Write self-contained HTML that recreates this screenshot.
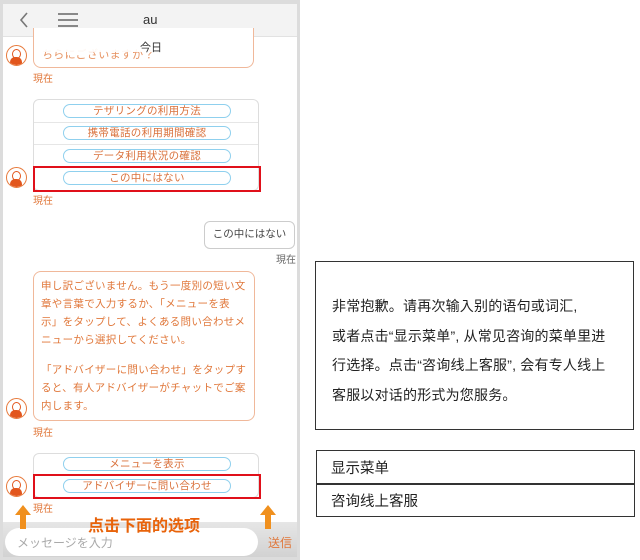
<!DOCTYPE html>
<html><head><meta charset="utf-8"><style>
*{margin:0;padding:0;box-sizing:border-box}
body{width:640px;height:560px;background:#fff;position:relative;overflow:hidden;font-family:"Liberation Sans","Noto Sans CJK JP",sans-serif}
.a{position:absolute}
.phone{left:0;top:0;width:300px;height:560px;background:#fff;border:3px solid #dcdcdc;border-top-width:4px;border-right-width:3px}
.hdr{left:3px;top:4px;width:294px;height:33px;background:#f3f3f3;border-bottom:1px solid #e2e2e2}
.bub{border:1px solid #f0b89a;border-radius:8px;background:#fff}
.card{border:1px solid #ddd;border-radius:6px;background:#fff}
.pill{position:absolute;left:29px;width:168px;height:14px;border:1.5px solid #8fd0ee;border-radius:7px;font-size:10.5px;line-height:12px;text-align:center;color:#d9703a;letter-spacing:.3px}
.sep{position:absolute;left:0;width:100%;height:1px;background:#e6e6e6}
.red{border:2px solid #e0101a}
.ts{font-size:10px;color:#e0773a}
.av{width:21px;height:21px;border:1.5px solid #e77a3c;border-radius:50%;overflow:hidden}
.av:after{content:"";position:absolute;left:3px;top:11px;width:12px;height:8px;background:#e2561d;border-radius:5px 5px 0 0}
.av:before{content:"";position:absolute;left:5px;top:3px;width:7px;height:8px;border:1.5px solid #e2561d;border-radius:50%}
.bt{font-size:10.5px;line-height:18px;color:#e0773a;letter-spacing:.3px;white-space:nowrap}
.arr{width:0;height:0;border-left:8px solid transparent;border-right:8px solid transparent;border-bottom:10px solid #f0901e}
.stem{width:6px;height:14px;background:#f0901e}
.box{border:1.5px solid #333;color:#222}
</style></head><body>
<div class="a phone"></div>
<div class="a hdr"></div>
<svg class="a" style="left:18px;top:12px" width="12" height="16"><path d="M9 1 L3 8 L9 15" stroke="#777" stroke-width="1.6" fill="none"/></svg>
<div class="a" style="left:58px;top:13px;width:20px;height:1.5px;background:#888"></div>
<div class="a" style="left:58px;top:19px;width:20px;height:1.5px;background:#888"></div>
<div class="a" style="left:58px;top:25px;width:20px;height:1.5px;background:#888"></div>
<div class="a" style="left:143px;top:12px;font-size:13px;color:#333">au</div>

<div class="a bub" style="left:33px;top:28px;width:221px;height:40px;border-top:none;border-radius:0 0 8px 8px"></div>
<div class="a bt" style="left:42px;top:46px;opacity:.8;font-size:11px">ちらにございますか？</div>
<div class="a" style="left:34px;top:36px;width:218px;height:16px;background:rgba(255,255,255,.9)"></div>
<div class="a" style="left:140px;top:39px;font-size:11px;color:#333">今日</div>
<div class="a av" style="left:6px;top:45px"></div>
<div class="a ts" style="left:33px;top:70px">現在</div>

<div class="a card" style="left:33px;top:99px;width:226px;height:92px">
<div class="pill" style="top:4px">テザリングの利用方法</div>
<div class="sep" style="top:22px"></div>
<div class="pill" style="top:26px">携帯電話の利用期間確認</div>
<div class="sep" style="top:44px"></div>
<div class="pill" style="top:49px">データ利用状況の確認</div>
<div class="sep" style="top:67px"></div>
<div class="pill" style="top:71px">この中にはない</div>
</div>
<div class="a red" style="left:33px;top:166px;width:228px;height:26px"></div>
<div class="a av" style="left:6px;top:167px"></div>
<div class="a ts" style="left:33px;top:192px">現在</div>

<div class="a" style="left:204px;top:221px;width:91px;height:28px;border:1.5px solid #ccc;border-radius:6px;font-size:10.5px;line-height:25px;text-align:center;color:#444">この中にはない</div>
<div class="a" style="left:276px;top:251px;font-size:10px;color:#666">現在</div>

<div class="a bub" style="left:33px;top:271px;width:222px;height:150px"></div>
<div class="a bt" style="left:41px;top:277px">申し訳ございません。もう一度別の短い文<br>章や言葉で入力するか、「メニューを表<br>示」をタップして、よくある問い合わせメ<br>ニューから選択してください。<br><span style="display:block;height:12px"></span>「アドバイザーに問い合わせ」をタップす<br>ると、有人アドバイザーがチャットでご案<br>内します。</div>
<div class="a av" style="left:6px;top:398px"></div>
<div class="a ts" style="left:33px;top:424px">現在</div>

<div class="a card" style="left:33px;top:453px;width:226px;height:45px">
<div class="pill" style="top:3px">メニューを表示</div>
<div class="sep" style="top:20px"></div>
<div class="pill" style="top:25px">アドバイザーに問い合わせ</div>
</div>
<div class="a red" style="left:33px;top:474px;width:228px;height:25px"></div>
<div class="a av" style="left:6px;top:476px"></div>
<div class="a ts" style="left:33px;top:500px">現在</div>

<div class="a" style="left:3px;top:522px;width:294px;height:35px;background:linear-gradient(#e6e6e6,#d2d2d2)"></div>
<div class="a" style="left:5px;top:528px;width:253px;height:28px;background:#fff;border-radius:14px"></div>
<div class="a" style="left:17px;top:534px;font-size:12px;color:#aaa">メッセージを入力</div>
<div class="a" style="left:268px;top:534px;font-size:12px;color:#e0773a">送信</div>

<div class="a arr" style="left:15px;top:505px"></div><div class="a stem" style="left:20px;top:515px"></div>
<div class="a arr" style="left:260px;top:505px"></div><div class="a stem" style="left:265px;top:515px"></div>
<div class="a" style="left:88px;top:512px;font-size:16px;font-weight:bold;color:#e8630a">点击下面的选项</div>

<div class="a box" style="left:315px;top:261px;width:319px;height:169px;padding:30px 0 0 16px;line-height:29.5px;font-size:14px;letter-spacing:.2px;white-space:nowrap">非常抱歉。请再次输入别的语句或词汇,<br>或者点击“显示菜单”, 从常见咨询的菜单里进<br>行选择。点击“咨询线上客服”, 会有专人线上<br>客服以对话的形式为您服务。</div>
<div class="a box" style="left:316px;top:450px;width:319px;height:67px"></div>
<div class="a" style="left:317px;top:483px;width:317px;height:1.5px;background:#333"></div>
<div class="a" style="left:331px;top:457px;font-size:14.5px;color:#222">显示菜单</div>
<div class="a" style="left:331px;top:490px;font-size:14.5px;color:#222">咨询线上客服</div>
</body></html>
